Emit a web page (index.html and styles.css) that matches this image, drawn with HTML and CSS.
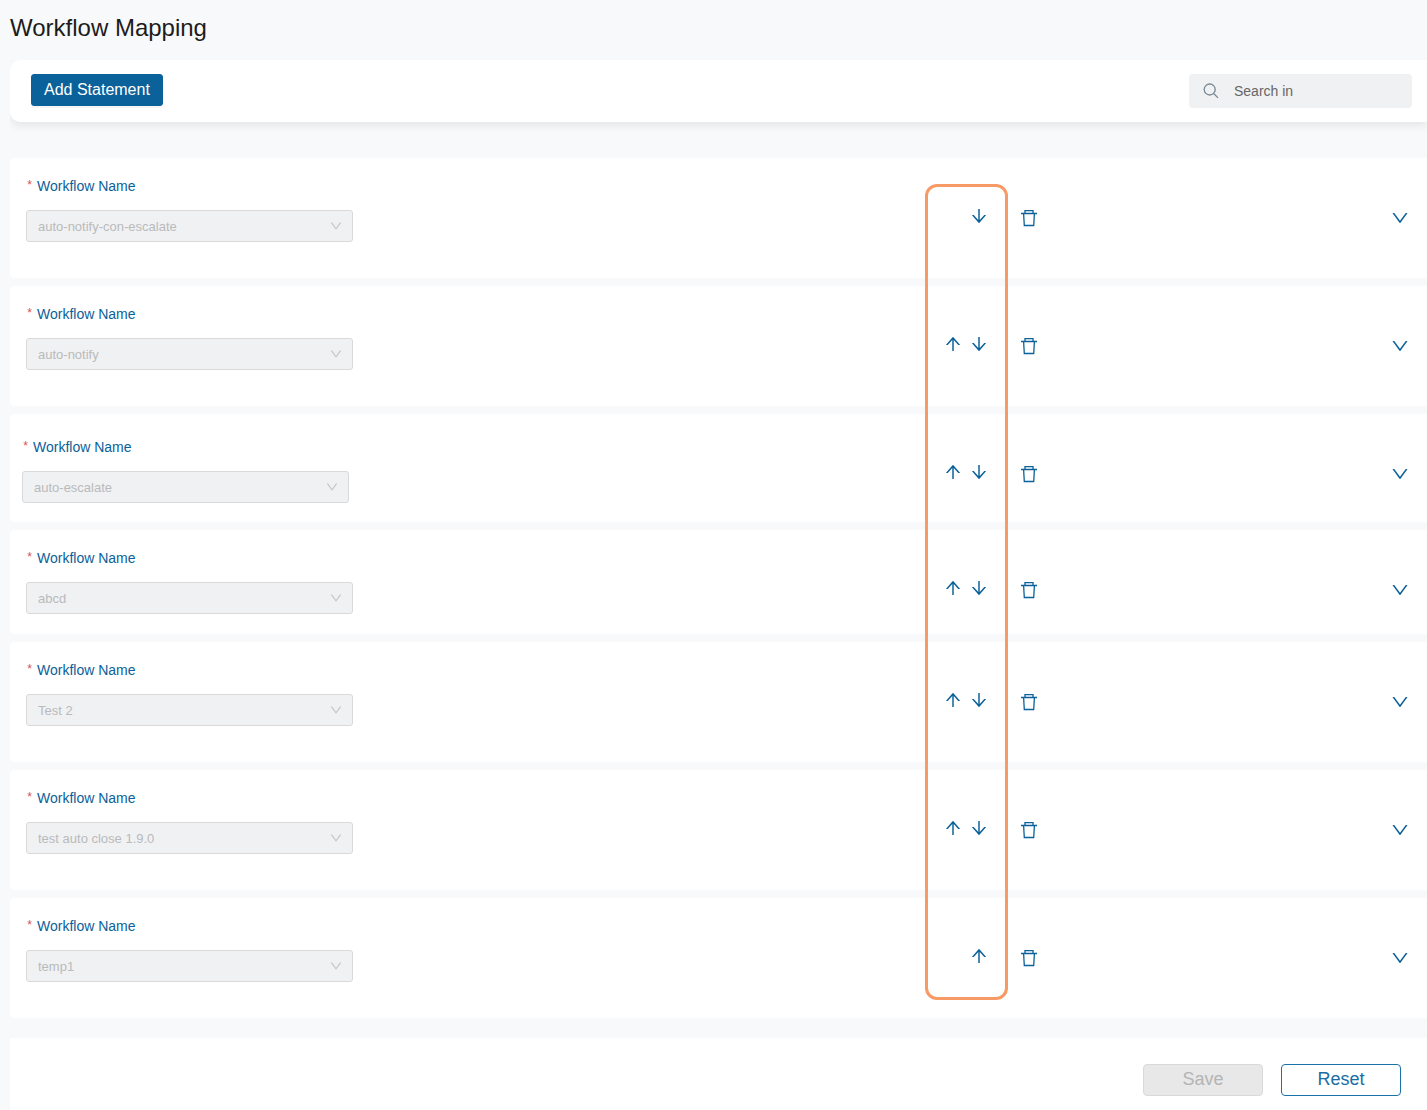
FILE: index.html
```html
<!DOCTYPE html>
<html lang="en">
<head>
<meta charset="utf-8">
<meta name="viewport" content="width=device-width, initial-scale=1">
<title>Workflow Mapping</title>
<link rel="stylesheet" href="styles.css">
</head>
<body>
<svg class="sprite" aria-hidden="true">
  <symbol id="search" viewBox="0 0 18 18"><path d="M7.7 2a5.5 5.5 0 1 1 0 11a5.5 5.5 0 1 1 0-11zM11.7 11.5L16 15.9" fill="none" stroke="currentColor" stroke-width="1.3"/></symbol>
  <symbol id="chevron" viewBox="0 0 1024 1024"><path d="M884 256h-75c-5.1 0-9.9 2.5-12.9 6.6L512 654.2 227.9 262.6c-3-4.1-7.8-6.6-12.9-6.6h-75c-6.5 0-10.3 7.4-6.5 12.7l352.6 486.1c12.8 17.6 39 17.6 51.7 0l352.6-486.1c3.9-5.3.1-12.7-6.4-12.7z"/></symbol>
  <symbol id="trash" viewBox="0 0 20 20"><path d="M6 5V2.6h8V5M2 5.5h16M4.6 5.5l.7 12h9.4l.7-12" fill="none" stroke="currentColor" stroke-width="1.3"/></symbol>
  <symbol id="down" viewBox="0 0 1024 1024"><path d="M862 465.3h-81c-4.6 0-9 2-12.1 5.5L550 723.1V160c0-4.4-3.6-8-8-8h-60c-4.4 0-8 3.6-8 8v563.1L255.1 470.8c-3-3.5-7.4-5.5-12.1-5.5h-81c-6.8 0-10.5 8.1-6 13.2L487.9 861a31.96 31.96 0 0048.3 0L868 478.5c4.5-5.2.8-13.2-6-13.2z"/></symbol>
  <symbol id="up" viewBox="0 0 1024 1024"><path d="M868 545.5L536.1 163a31.96 31.96 0 00-48.3 0L156 545.5a7.97 7.97 0 006 13.2h81c4.6 0 9-2 12.1-5.5L474 300.9V864c0 4.4 3.6 8 8 8h60c4.4 0 8-3.6 8-8V300.9l218.9 252.3c3 3.5 7.4 5.5 12.1 5.5h81c6.8 0 10.5-8 6-13.2z"/></symbol>
</svg>
<main class="page">
  <h1 class="title">Workflow Mapping</h1>

  <div class="toolbar">
    <button class="btn btn-primary" type="button">Add Statement</button>
    <label class="search">
      <svg class="search-icon" aria-hidden="true"><use href="#search"/></svg>
      <input class="search-input" type="search" placeholder="Search in" aria-label="Search in">
    </label>
  </div>

  <div class="list">
    <section class="row">
      <div class="field">
        <label class="label" for="wf1"><span class="required">*</span>Workflow Name</label>
        <div class="select-wrap"><select class="select" id="wf1" disabled><option>auto-notify-con-escalate</option></select><svg class="select-icon" aria-hidden="true"><use href="#chevron"/></svg></div>
      </div>
      <div class="actions">
        <div class="moves">
          <button class="icon-btn" type="button" aria-label="Move down"><svg class="icon"><use href="#down"/></svg></button>
        </div>
        <button class="icon-btn" type="button" aria-label="Delete"><svg class="icon"><use href="#trash"/></svg></button>
      </div>
      <button class="icon-btn expand" type="button" aria-label="Expand"><svg class="icon"><use href="#chevron"/></svg></button>
    </section>

    <section class="row">
      <div class="field">
        <label class="label" for="wf2"><span class="required">*</span>Workflow Name</label>
        <div class="select-wrap"><select class="select" id="wf2" disabled><option>auto-notify</option></select><svg class="select-icon" aria-hidden="true"><use href="#chevron"/></svg></div>
      </div>
      <div class="actions">
        <div class="moves">
          <button class="icon-btn" type="button" aria-label="Move up"><svg class="icon"><use href="#up"/></svg></button>
          <button class="icon-btn" type="button" aria-label="Move down"><svg class="icon"><use href="#down"/></svg></button>
        </div>
        <button class="icon-btn" type="button" aria-label="Delete"><svg class="icon"><use href="#trash"/></svg></button>
      </div>
      <button class="icon-btn expand" type="button" aria-label="Expand"><svg class="icon"><use href="#chevron"/></svg></button>
    </section>

    <section class="row row-inset">
      <div class="field">
        <label class="label" for="wf3"><span class="required">*</span>Workflow Name</label>
        <div class="select-wrap"><select class="select" id="wf3" disabled><option>auto-escalate</option></select><svg class="select-icon" aria-hidden="true"><use href="#chevron"/></svg></div>
      </div>
      <div class="actions">
        <div class="moves">
          <button class="icon-btn" type="button" aria-label="Move up"><svg class="icon"><use href="#up"/></svg></button>
          <button class="icon-btn" type="button" aria-label="Move down"><svg class="icon"><use href="#down"/></svg></button>
        </div>
        <button class="icon-btn" type="button" aria-label="Delete"><svg class="icon"><use href="#trash"/></svg></button>
      </div>
      <button class="icon-btn expand" type="button" aria-label="Expand"><svg class="icon"><use href="#chevron"/></svg></button>
    </section>

    <section class="row row-compact">
      <div class="field">
        <label class="label" for="wf4"><span class="required">*</span>Workflow Name</label>
        <div class="select-wrap"><select class="select" id="wf4" disabled><option>abcd</option></select><svg class="select-icon" aria-hidden="true"><use href="#chevron"/></svg></div>
      </div>
      <div class="actions">
        <div class="moves">
          <button class="icon-btn" type="button" aria-label="Move up"><svg class="icon"><use href="#up"/></svg></button>
          <button class="icon-btn" type="button" aria-label="Move down"><svg class="icon"><use href="#down"/></svg></button>
        </div>
        <button class="icon-btn" type="button" aria-label="Delete"><svg class="icon"><use href="#trash"/></svg></button>
      </div>
      <button class="icon-btn expand" type="button" aria-label="Expand"><svg class="icon"><use href="#chevron"/></svg></button>
    </section>

    <section class="row">
      <div class="field">
        <label class="label" for="wf5"><span class="required">*</span>Workflow Name</label>
        <div class="select-wrap"><select class="select" id="wf5" disabled><option>Test 2</option></select><svg class="select-icon" aria-hidden="true"><use href="#chevron"/></svg></div>
      </div>
      <div class="actions">
        <div class="moves">
          <button class="icon-btn" type="button" aria-label="Move up"><svg class="icon"><use href="#up"/></svg></button>
          <button class="icon-btn" type="button" aria-label="Move down"><svg class="icon"><use href="#down"/></svg></button>
        </div>
        <button class="icon-btn" type="button" aria-label="Delete"><svg class="icon"><use href="#trash"/></svg></button>
      </div>
      <button class="icon-btn expand" type="button" aria-label="Expand"><svg class="icon"><use href="#chevron"/></svg></button>
    </section>

    <section class="row">
      <div class="field">
        <label class="label" for="wf6"><span class="required">*</span>Workflow Name</label>
        <div class="select-wrap"><select class="select" id="wf6" disabled><option>test auto close 1.9.0</option></select><svg class="select-icon" aria-hidden="true"><use href="#chevron"/></svg></div>
      </div>
      <div class="actions">
        <div class="moves">
          <button class="icon-btn" type="button" aria-label="Move up"><svg class="icon"><use href="#up"/></svg></button>
          <button class="icon-btn" type="button" aria-label="Move down"><svg class="icon"><use href="#down"/></svg></button>
        </div>
        <button class="icon-btn" type="button" aria-label="Delete"><svg class="icon"><use href="#trash"/></svg></button>
      </div>
      <button class="icon-btn expand" type="button" aria-label="Expand"><svg class="icon"><use href="#chevron"/></svg></button>
    </section>

    <section class="row">
      <div class="field">
        <label class="label" for="wf7"><span class="required">*</span>Workflow Name</label>
        <div class="select-wrap"><select class="select" id="wf7" disabled><option>temp1</option></select><svg class="select-icon" aria-hidden="true"><use href="#chevron"/></svg></div>
      </div>
      <div class="actions">
        <div class="moves">
          <button class="icon-btn" type="button" aria-label="Move up"><svg class="icon"><use href="#up"/></svg></button>
        </div>
        <button class="icon-btn" type="button" aria-label="Delete"><svg class="icon"><use href="#trash"/></svg></button>
      </div>
      <button class="icon-btn expand" type="button" aria-label="Expand"><svg class="icon"><use href="#chevron"/></svg></button>
    </section>

    <div class="highlight"></div>
  </div>

  <footer class="footer">
    <button class="btn btn-wide btn-disabled" type="button" disabled>Save</button>
    <button class="btn btn-wide btn-outline" type="button">Reset</button>
  </footer>
</main>
</body>
</html>
```
FILE: styles.css
```css
:root {
  --blue: #0b6199;
  --page: #f8f9fb;
  --muted: #f0f1f3;
  --actions-left: calc(66% - 2px);
}

* {
  box-sizing: border-box;
}

body {
  margin: 0;
  background: var(--page);
  color: #1c1c1c;
  font-family: "Liberation Sans", Arial, sans-serif;
  font-size: 14px;
}

button,
input,
select {
  margin: 0;
  font-family: inherit;
}

svg {
  display: block;
  fill: currentColor;
}

.sprite {
  display: none;
}

.page {
  display: flex;
  flex-direction: column;
  min-height: 100vh;
  padding-left: 10px;
}

.title {
  margin: 10px 0 14px;
  font-size: 24px;
  font-weight: 400;
  line-height: 36px;
}

/* Toolbar */

.toolbar {
  display: flex;
  align-items: flex-start;
  justify-content: space-between;
  margin-bottom: 36px;
  padding: 14px 15px 14px 21px;
  border-radius: 10px 0 0 10px;
  background: #fff;
  box-shadow: 0 4px 8px rgba(0, 0, 0, 0.08);
  clip-path: inset(0 0 -16px 0);
}

.btn {
  height: 32px;
  padding: 0 12px;
  border: 1px solid transparent;
  border-radius: 4px;
  font-size: 16px;
}

.btn-primary {
  border-color: var(--blue);
  border-radius: 3px;
  background: var(--blue);
  color: #fff;
  box-shadow: 0 2px 0 rgba(0, 0, 0, 0.04);
}

.search {
  display: flex;
  align-items: center;
  gap: 14px;
  width: 223px;
  height: 34px;
  padding: 0 13px;
  border-radius: 4px;
  background: var(--muted);
}

.search-icon {
  flex: none;
  width: 18px;
  height: 18px;
  color: #788896;
}

.search-input {
  flex: 1;
  min-width: 0;
  padding: 0;
  border: 0;
  outline: 0;
  background: transparent;
  font-size: 14px;
  line-height: 20px;
  appearance: none;
}

.search-input::placeholder {
  color: #666;
}

/* Statement rows */

.list {
  position: relative;
  display: flex;
  flex-direction: column;
  gap: 8px;
}

.row {
  display: grid;
  grid-template-columns: var(--actions-left) auto 1fr;
  align-items: start;
  border-radius: 4px 0 0 4px;
  background: #fff;
}

.field {
  padding: 16px 16px 36px;
}

.row-inset .field {
  padding: 21px 12px 19px;
}

.row-compact .field {
  padding-bottom: 20px;
}

.label {
  display: flex;
  margin-bottom: 12px;
  color: var(--blue);
  line-height: 24px;
}

.required {
  width: 11px;
  color: #d9534f;
  font-family: "Liberation Mono", "Courier New", monospace;
  font-size: 12px;
}

.select-wrap {
  position: relative;
  max-width: 327px;
}

.select {
  display: block;
  width: 100%;
  height: 32px;
  padding: 0 30px 0 11px;
  border: 1px solid #d9d9d9;
  border-radius: 3px;
  background: var(--muted);
  color: #b9babb;
  font-size: 13px;
  opacity: 1;
  appearance: none;
}

.select-icon {
  position: absolute;
  top: 9px;
  right: 10px;
  width: 14px;
  height: 14px;
  color: #c4c4c4;
  pointer-events: none;
}

.actions {
  display: flex;
  gap: 30px;
  padding-top: 50px;
}

.moves {
  display: flex;
  justify-content: flex-end;
  gap: 6px;
  width: 46px;
  margin-top: -2px;
}

.icon-btn {
  width: 20px;
  height: 20px;
  padding: 0;
  border: 0;
  background: none;
  color: var(--blue);
}

.icon {
  width: 20px;
  height: 20px;
}

.expand {
  justify-self: end;
  margin: 50px 17px 0 0;
}

.highlight {
  position: absolute;
  top: 26px;
  bottom: 18px;
  left: calc(var(--actions-left) - 18px);
  width: 83px;
  border: 3px solid #f89a65;
  border-radius: 12px;
  pointer-events: none;
}

/* Footer */

.footer {
  display: flex;
  flex: 1;
  align-items: flex-start;
  justify-content: flex-end;
  gap: 18px;
  margin-top: 20px;
  padding: 26px 26px 14px;
  background: #fff;
}

.btn-wide {
  width: 120px;
  padding-bottom: 2px;
  font-size: 18px;
}

.btn-disabled {
  border-color: #d9d9d9;
  background: #e8e8e8;
  color: #b4b4b4;
}

.btn-outline {
  border-color: #1a73a8;
  background: #fff;
  color: #1a6da3;
}
```
